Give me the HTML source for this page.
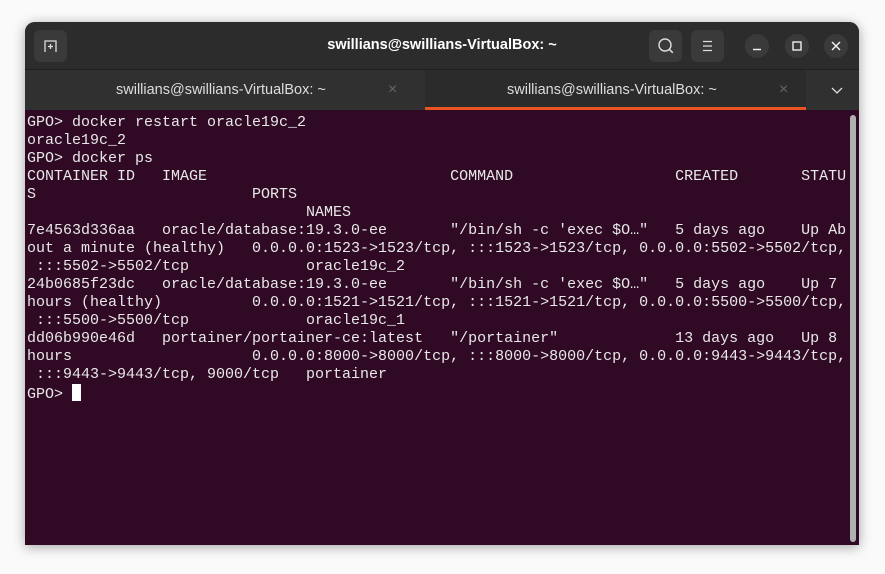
<!DOCTYPE html>
<html><head><style>
html,body{margin:0;padding:0;width:885px;height:574px;background:#fafafa;overflow:hidden;font-family:"Liberation Sans",sans-serif}
.win{position:absolute;left:25px;top:22px;width:834px;height:523px;border-radius:10px 10px 0 0;overflow:hidden;background:#300a24;box-shadow:0 2px 12px rgba(0,0,0,.35)}
.hdr{position:absolute;left:0;top:0;width:100%;height:47px;background:#2c2c2c;border-bottom:1px solid #1e1e1e}
.title{position:absolute;left:0;right:0;top:15px;text-align:center;color:#fff;font-weight:bold;font-size:14.5px}
.btn{position:absolute;top:8px;width:33px;height:32px;border-radius:6px;background:#3a3a3a}
.circ{position:absolute;top:12px;width:24px;height:24px;border-radius:50%;background:#3a3a3a}
.tabs{position:absolute;left:0;top:48px;width:100%;height:40px;background:#303030}
.tab{position:absolute;top:0;height:40px;color:#ddd;font-size:14.5px;line-height:40px}
.term{position:absolute;left:2px;top:92px;margin:0;color:#e8e8e8;font-family:"Liberation Mono",monospace;font-size:15px;line-height:18px;white-space:pre}
.cur{display:inline-block;width:9px;height:17px;background:#fff;vertical-align:-3px}
.sb{position:absolute;left:825px;top:93px;width:6px;height:427px;border-radius:3px;background:#b0b0b0}
</style></head><body>
<div class="win">
 <div class="hdr">
  <div class="btn" style="left:9px"><svg width="33" height="32"><path d="M11 22V11h11v11M14 16.5h5M16.5 14v5" stroke="#ddd" stroke-width="1.3" fill="none"/></svg></div>
  <div class="title">swillians@swillians-VirtualBox: ~</div>
  <div class="btn" style="left:624px"><svg width="33" height="32"><circle cx="16" cy="15" r="6" stroke="#ddd" stroke-width="1.4" fill="none"/><path d="M20.3 19.3l3.5 3.5" stroke="#ddd" stroke-width="1.5"/></svg></div>
  <div class="btn" style="left:666px"><svg width="33" height="32"><path d="M12 11.5h9M12 16h9M12 20.5h9" stroke="#ddd" stroke-width="1.2"/></svg></div>
  <div class="circ" style="left:720px"><svg width="24" height="24"><path d="M8 15.5h8" stroke="#eee" stroke-width="1.5"/></svg></div>
  <div class="circ" style="left:760px"><svg width="24" height="24"><rect x="8" y="8" width="8" height="8" stroke="#eee" stroke-width="1.4" fill="none"/></svg></div>
  <div class="circ" style="left:799px"><svg width="24" height="24"><path d="M8 8l8 8M16 8l-8 8" stroke="#eee" stroke-width="1.5"/></svg></div>
 </div>
 <div class="tabs">
  <div class="tab" style="left:91px">swillians@swillians-VirtualBox: ~</div>
  <div class="tab" style="left:363px;color:#666;font-size:16px">×</div>
  <div style="position:absolute;left:400px;top:0;width:381px;height:40px;background:#2b2b2b"></div>
  <div class="tab" style="left:482px">swillians@swillians-VirtualBox: ~</div>
  <div class="tab" style="left:754px;color:#666;font-size:16px">×</div>
  <div style="position:absolute;left:400px;top:37px;width:381px;height:3px;background:#e95420"></div>
  <svg style="position:absolute;left:805px;top:14px" width="14" height="12"><path d="M2 4l5 5 5-5" stroke="#ddd" stroke-width="1.3" fill="none"/></svg>
 </div>
<pre class="term">GPO&gt; docker restart oracle19c_2
oracle19c_2
GPO&gt; docker ps
CONTAINER ID   IMAGE                           COMMAND                  CREATED       STATU
S                        PORTS
                               NAMES
7e4563d336aa   oracle/database:19.3.0-ee       "/bin/sh -c 'exec $O…"   5 days ago    Up Ab
out a minute (healthy)   0.0.0.0:1523-&gt;1523/tcp, :::1523-&gt;1523/tcp, 0.0.0.0:5502-&gt;5502/tcp,
 :::5502-&gt;5502/tcp             oracle19c_2
24b0685f23dc   oracle/database:19.3.0-ee       "/bin/sh -c 'exec $O…"   5 days ago    Up 7
hours (healthy)          0.0.0.0:1521-&gt;1521/tcp, :::1521-&gt;1521/tcp, 0.0.0.0:5500-&gt;5500/tcp,
 :::5500-&gt;5500/tcp             oracle19c_1
dd06b990e46d   portainer/portainer-ce:latest   "/portainer"             13 days ago   Up 8
hours                    0.0.0.0:8000-&gt;8000/tcp, :::8000-&gt;8000/tcp, 0.0.0.0:9443-&gt;9443/tcp,
 :::9443-&gt;9443/tcp, 9000/tcp   portainer
GPO&gt; <span class="cur"></span></pre>
 <div class="sb"></div>
</div>
</body></html>
